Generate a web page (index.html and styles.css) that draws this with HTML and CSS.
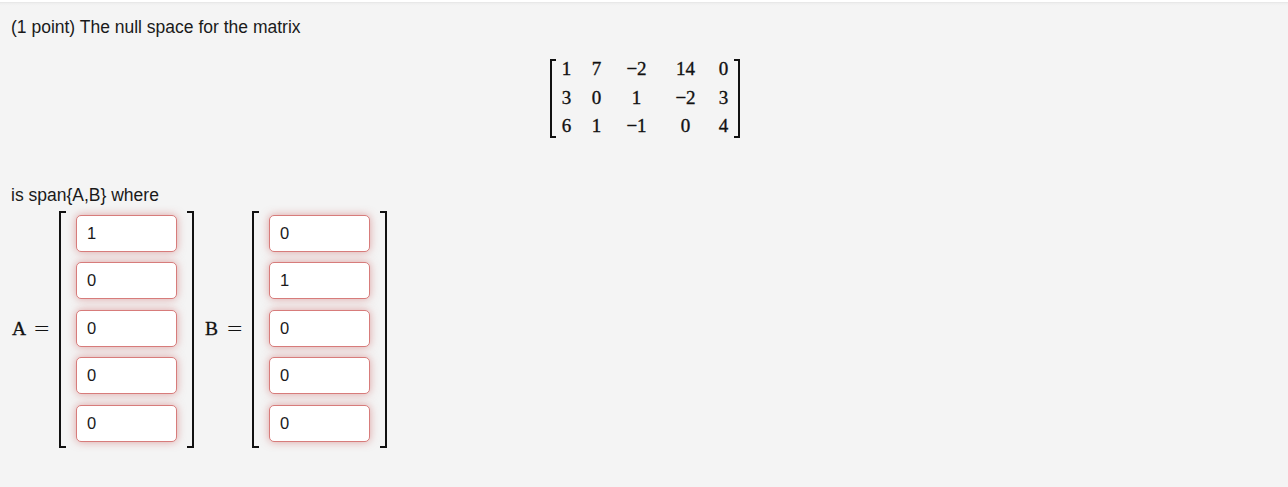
FILE: index.html
```html
<!DOCTYPE html>
<html>
<head>
<meta charset="utf-8">
<link rel="stylesheet" href="styles.css">
</head>
<body>
<div class="page">
  <p class="line first">(1 point) The null space for the matrix</p>
  <div class="matrix-wrap">
    <div class="mbr left"></div>
    <div class="matrix">
      <span>1</span><span>7</span><span>−2</span><span>14</span><span>0</span>
      <span>3</span><span>0</span><span>1</span><span>−2</span><span>3</span>
      <span>6</span><span>1</span><span>−1</span><span>0</span><span>4</span>
    </div>
    <div class="mbr right"></div>
  </div>
  <p class="line second">is span{A,B} where</p>
  <div class="vectors">
    <div class="label"><span class="var">A</span><span class="eq">=</span></div>
    <div class="vec">
      <div class="br left"></div>
      <div class="col">
        <input class="ans" type="text" value="1">
        <input class="ans" type="text" value="0">
        <input class="ans" type="text" value="0">
        <input class="ans" type="text" value="0">
        <input class="ans" type="text" value="0">
      </div>
      <div class="br right"></div>
    </div>
    <div class="label b"><span class="var">B</span><span class="eq">=</span></div>
    <div class="vec">
      <div class="br left"></div>
      <div class="col">
        <input class="ans" type="text" value="0">
        <input class="ans" type="text" value="1">
        <input class="ans" type="text" value="0">
        <input class="ans" type="text" value="0">
        <input class="ans" type="text" value="0">
      </div>
      <div class="br right"></div>
    </div>
  </div>
</div>
</body>
</html>
```

FILE: styles.css
```css
html, body {
  margin: 0;
  padding: 0;
  background: #ffffff;
}
body {
  font-family: "Liberation Sans", Arial, sans-serif;
  color: #1a1a1a;
}
.page {
  margin-top: 2px;
  height: 485px;
  box-sizing: border-box;
  background: linear-gradient(to bottom, #e2e2e2 0px, #eeeeee 1px, #f3f3f3 3px, #f4f4f4 4px);
  padding: 15px 0 0 11px;
}
.line {
  margin: 0;
  font-size: 17.5px;
  line-height: 20px;
}
.matrix-wrap {
  display: flex;
  justify-content: center;
  align-items: center;
  margin-top: 18px;
  padding-right: 11px;
  margin-left: 1px;
}
.mbr {
  width: 4px;
  height: 75px;
  border-top: 2px solid #111;
  border-bottom: 2px solid #111;
  margin-top: 2px;
}
.mbr.left { border-left: 2px solid #111; }
.mbr.right { border-right: 2px solid #111; }
.matrix {
  display: grid;
  grid-template-columns: 22px 38px 42px 56px 20px;
  grid-auto-rows: 28.5px;
  font-family: "Liberation Serif", "Times New Roman", serif;
  font-size: 19px;
  line-height: 28.5px;
  text-align: center;
  color: #111;
  -webkit-text-stroke: 0.35px #111;
}
.second {
  margin-top: 44px;
}
.vectors {
  display: flex;
  align-items: center;
  margin-top: 6px;
}
.label {
  display: flex;
  align-items: center;
  font-family: "Liberation Serif", "Times New Roman", serif;
  font-size: 19.5px;
  color: #111;
  padding-left: 1px;
  -webkit-text-stroke: 0.3px #111;
}
.label.b {
  margin-left: 10px;
}
.var {
  width: 14px;
}
.eq {
  display: inline-block;
  margin-left: 8px;
  transform: scaleX(1.4);
  transform-origin: left center;
  width: 15px;
  margin-right: 10px;
  -webkit-text-stroke: 0;
}
.vec {
  display: flex;
  align-items: stretch;
}
.br {
  width: 5px;
  border-top: 2px solid #111;
  border-bottom: 2px solid #111;
}
.br.left { border-left: 2px solid #111; }
.br.right { border-right: 2px solid #111; }
.col {
  display: flex;
  flex-direction: column;
  gap: 10.5px;
  padding: 4px 10px 6px 10px;
}
.ans {
  width: 101px;
  height: 37px;
  box-sizing: border-box;
  margin: 0;
  padding: 0 0 0 10px;
  border: 1px solid #d77c7b;
  border-radius: 5px;
  background: #ffffff;
  box-shadow: 0 0 8px rgba(200, 80, 80, 0.5);
  font-family: "Liberation Sans", Arial, sans-serif;
  font-size: 16.5px;
  color: #1a1a1a;
  outline: none;
}
```
